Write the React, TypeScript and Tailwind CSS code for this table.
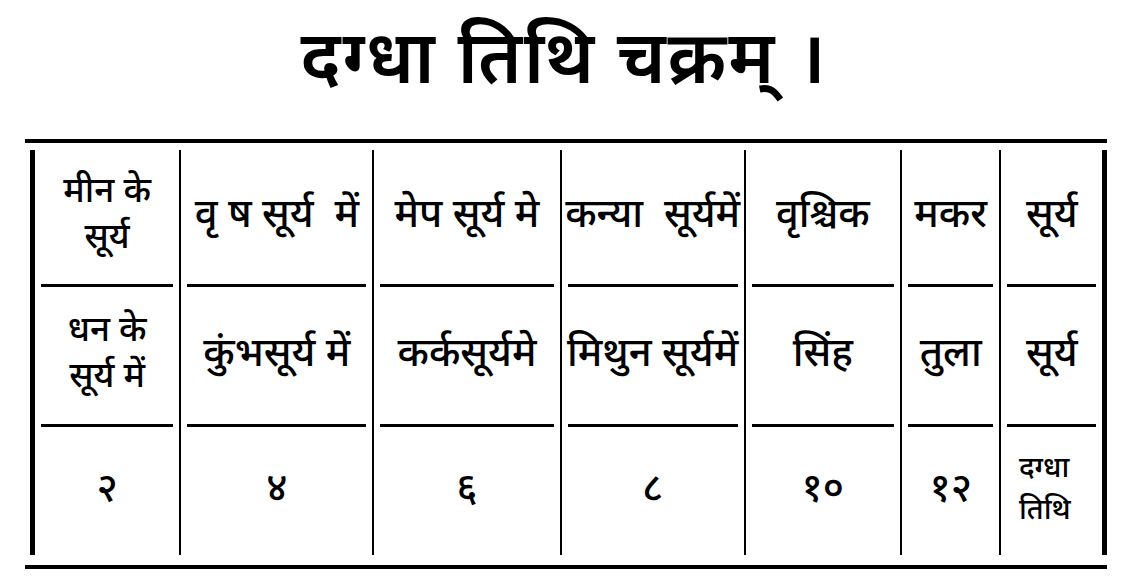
import React from "react";

const FONT = { fontFamily: '"Noto Sans Devanagari", "Lohit Devanagari", "Noto Sans", "FreeSans", sans-serif' };

type Col = { w: string; cells: React.ReactNode[] };

const cols: Col[] = [
  { w: "w-[145px]", cells: [<span className="leading-[46px] text-[35px] block">मीन के<br />सूर्य</span>, <span className="leading-[46px] text-[35px] block">धन के<br />सूर्य में</span>, "२"] },
  { w: "w-[194px]", cells: ["वृ ष सूर्य  में", "कुंभसूर्य में", "४"] },
  { w: "w-[188px]", cells: ["मेप सूर्य मे", "कर्कसूर्यमे", "६"] },
  { w: "w-[185px]", cells: ["कन्या  सूर्यमें", "मिथुन सूर्यमें", "८"] },
  { w: "w-[157px]", cells: ["वृश्चिक", "सिंह", "१०"] },
  { w: "w-[100px]", cells: ["मकर", "तुला", "१२"] },
  { w: "w-[103px]", cells: ["सूर्य", "सूर्य", <span className="leading-[42px] block text-[29px] text-left -ml-[14px]">दग्धा<br />तिथि</span>] },
];

const heights = ["h-[137px]", "h-[140px]", "h-[128px]"];

export default function App() {
  return (
    <div className="w-[1128px] h-[588px] bg-white text-black overflow-hidden" style={FONT}>
      <div className="h-[139px] flex items-center justify-center">
        <h1 className="text-[73px] font-semibold tracking-wide -mt-[8px]">दग्धा तिथि चक्रम् ।</h1>
      </div>
      <div className="ml-[25px] w-[1082px] h-[4px] bg-black" />
      <div className="ml-[30px] mt-[7px] flex border-l-[5px] border-r-[5px] border-black w-[1077px]">
        {cols.map((c, i) => (
          <div key={i} className={`${c.w} flex flex-col ${i > 0 ? "border-l-2 border-black" : ""}`}>
            {c.cells.map((cell, j) => (
              <div key={j} className={`${heights[j]} flex flex-col`}>
                <div className="flex-1 flex items-center justify-center text-[40px] font-medium whitespace-pre text-center">
                  {cell}
                </div>
                {j < 2 && <div className="mx-[6px] h-[3px] bg-black" />}
              </div>
            ))}
          </div>
        ))}
      </div>
      <div className="ml-[25px] mt-[10px] w-[1082px] h-[4px] bg-black" />
    </div>
  );
}
